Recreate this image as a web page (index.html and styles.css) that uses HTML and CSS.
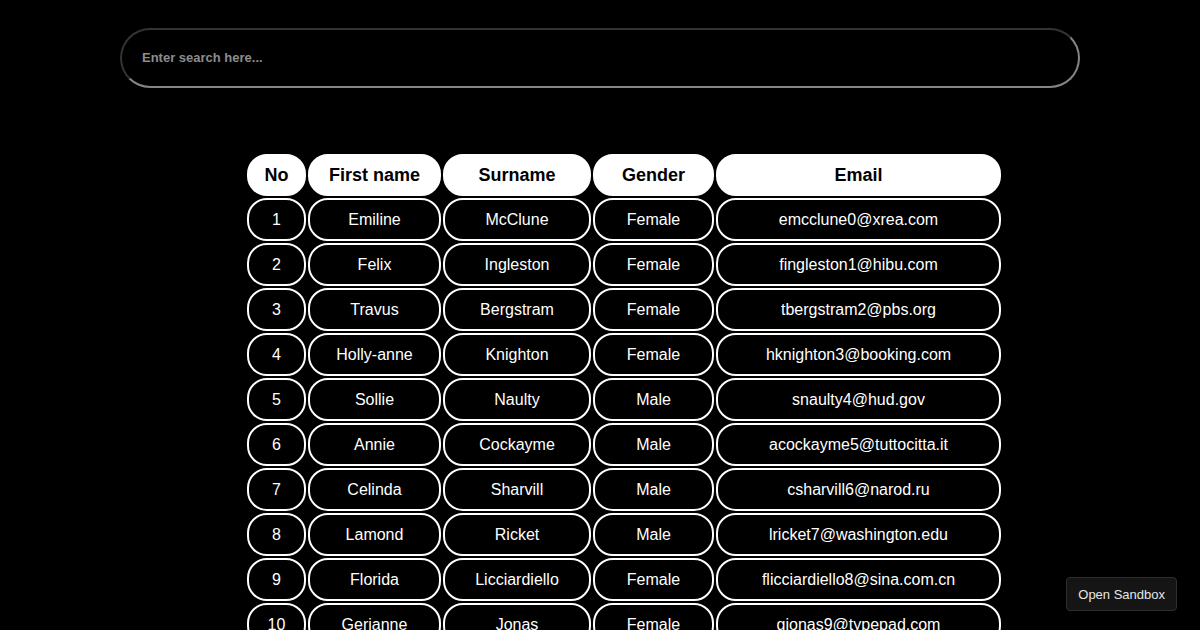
FILE: index.html
```html
<!DOCTYPE html>
<html lang="en">
<head>
    <meta charset="UTF-8">
    <meta name="viewport" content="width=device-width, initial-scale=1.0">
    <title>User Table</title>
    <link rel="stylesheet" href="styles.css">
</head>
<body>

<div class="search-wrap">
    <input type="text" class="search" placeholder="Enter search here...">
</div>

<!-- Users table -->
<table class="users">
    <thead>
        <tr>
            <th class="col-no">No</th>
            <th class="col-first">First name</th>
            <th class="col-last">Surname</th>
            <th class="col-gender">Gender</th>
            <th class="col-email">Email</th>
        </tr>
    </thead>
    <tbody>
        <tr><td>1</td><td>Emiline</td><td>McClune</td><td>Female</td><td>emcclune0@xrea.com</td></tr>
        <tr><td>2</td><td>Felix</td><td>Ingleston</td><td>Female</td><td>fingleston1@hibu.com</td></tr>
        <tr><td>3</td><td>Travus</td><td>Bergstram</td><td>Female</td><td>tbergstram2@pbs.org</td></tr>
        <tr><td>4</td><td>Holly-anne</td><td>Knighton</td><td>Female</td><td>hknighton3@booking.com</td></tr>
        <tr><td>5</td><td>Sollie</td><td>Naulty</td><td>Male</td><td>snaulty4@hud.gov</td></tr>
        <tr><td>6</td><td>Annie</td><td>Cockayme</td><td>Male</td><td>acockayme5@tuttocitta.it</td></tr>
        <tr><td>7</td><td>Celinda</td><td>Sharvill</td><td>Male</td><td>csharvill6@narod.ru</td></tr>
        <tr><td>8</td><td>Lamond</td><td>Ricket</td><td>Male</td><td>lricket7@washington.edu</td></tr>
        <tr><td>9</td><td>Florida</td><td>Licciardiello</td><td>Female</td><td>flicciardiello8@sina.com.cn</td></tr>
        <tr><td>10</td><td>Gerianne</td><td>Jonas</td><td>Female</td><td>gjonas9@typepad.com</td></tr>
    </tbody>
</table>

<button class="sandbox-btn">Open Sandbox</button>

</body>
</html>
```

FILE: styles.css
```css
body {
    margin: 0;
    padding-top: 28px;
    background-color: #000;
    font-family: "Liberation Sans", Arial, sans-serif;
    color: #fff;
    overflow: hidden;
}
.search-wrap {
    width: 960px;
    margin: 0 auto;
}
.search {
    box-sizing: border-box;
    width: 100%;
    height: 60px;
    padding: 0 20px 2px;
    border: 2px solid #858585;
    border-top-color: #333;
    border-left-color: #333;
    border-radius: 30px;
    background-color: #000;
    color: #fff;
    font-family: "Liberation Sans", Arial, sans-serif;
    font-size: 13px;
    font-weight: bold;
    outline: none;
}
.search::placeholder {
    color: #8c8c8c;
}
.users {
    margin: 64px 0 0 245px;
    border-collapse: separate;
    border-spacing: 2px;
    table-layout: fixed;
}
.users th,
.users td {
    box-sizing: border-box;
    padding: 0;
    border: 2px solid #fff;
    border-radius: 20px;
    text-align: center;
}
.users th {
    height: 42px;
    background-color: #fff;
    color: #000;
    font-size: 18px;
    font-weight: bold;
}
.users td {
    height: 43px;
    background-color: #000;
    color: #fff;
    font-size: 16px;
}
.col-no { width: 59px; }
.col-first { width: 133px; }
.col-last { width: 148px; }
.col-gender { width: 121px; }
.col-email { width: 285px; }
.sandbox-btn {
    position: fixed;
    right: 23px;
    bottom: 19px;
    height: 34px;
    padding: 0 11px;
    border: 1px solid #2e2e2e;
    border-radius: 4px;
    background-color: #151515;
    color: #e6e6e6;
    font-family: "Liberation Sans", Arial, sans-serif;
    font-size: 13px;
    cursor: pointer;
}
```
